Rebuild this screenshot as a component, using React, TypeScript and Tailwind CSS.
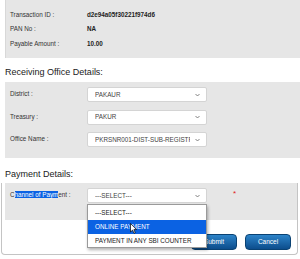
import { useState } from 'react';

const Chevron = () => (
  <svg width="5" height="3" viewBox="0 0 5 3" className="absolute right-[6px] top-1/2 -translate-y-1/2">
    <path d="M0.5 0.5 L2.5 2.5 L4.5 0.5" fill="none" stroke="#666" strokeWidth="0.8" />
  </svg>
);

const FakeSelect = ({ value }: { value: string }) => (
  <div className="relative w-[120px] h-[15px] bg-white border border-[#d4d4d4] rounded-[2px] flex items-center pl-[7px] pr-[16px] text-[#444] whitespace-nowrap">
    <span className="flex-1 min-w-0 overflow-hidden">{value}</span>
    <Chevron />
  </div>
);

const App = () => {
  const [channel] = useState('---SELECT---');

  const txnRows = [
    { label: 'Transaction ID :', value: 'd2e94a05f30221f974d6' },
    { label: 'PAN No :', value: 'NA' },
    { label: 'Payable Amount :', value: '10.00' },
  ];

  const officeRows = [
    { label: 'District :', value: 'PAKAUR' },
    { label: 'Treasury :', value: 'PAKUR' },
    { label: 'Office Name :', value: 'PKRSNR001-DIST-SUB-REGISTRAR' },
  ];

  const options = ['---SELECT---', 'ONLINE PAYMENT', 'PAYMENT IN ANY SBI COUNTER'];

  return (
    <div className="relative w-[300px] h-[259px] overflow-hidden bg-white font-['Liberation_Sans',Arial,sans-serif] text-[6.3px] text-[#333]">
      {/* Transaction summary */}
      <section className="ml-[5px] h-[58px] bg-[#e6e6e6] border-l border-[#d8d8d8] pt-[7px] pl-[4px]">
        {txnRows.map((row) => (
          <div key={row.label} className="grid grid-cols-[77px_1fr] h-[14.5px] items-center">
            <span>{row.label}</span>
            <span className="font-bold text-[#222]">{row.value}</span>
          </div>
        ))}
      </section>

      <h2 className="h-[24px] pt-[8px] pl-[5px] text-[9px] leading-[12px] text-[#222]">Receiving Office Details:</h2>

      {/* Receiving office */}
      <section className="ml-[5px] h-[76px] bg-[#e6e6e6] pt-[5px] pl-[5px]">
        {officeRows.map((row) => (
          <div key={row.label} className="flex items-start h-[22.5px]">
            <span className="w-[77px] pt-[2px]">{row.label}</span>
            <FakeSelect value={row.value} />
          </div>
        ))}
      </section>

      <h2 className="h-[25px] pt-[10px] pl-[5px] text-[9px] leading-[12px] text-[#222]">Payment Details:</h2>

      {/* Payment */}
      <section className="ml-[1px] w-[297px] h-[72px] border border-t-0 border-[#c4c4c4] rounded-b-[4px]">
        <div className="ml-[3px] h-[37px] bg-[#e6e6e6] pt-[5px] pl-[5px] flex items-start">
          <span className="w-[77px] pt-[2px] leading-[10px]">
            C<span className="bg-[#0b62e3] text-white">hannel of Paym</span>ent :
          </span>
          <div className="relative">
            <FakeSelect value={channel} />
            <div className="absolute left-0 top-[16px] w-[120px] h-[44px] bg-white border border-[#9a9a9a] shadow-[1px_2px_3px_rgba(0,0,0,0.3)] z-10 text-[#222]">
              {options.map((opt, i) => (
                <div
                  key={opt}
                  className={
                    i === 1
                      ? 'h-[14px] flex items-center pl-[7px] bg-[#0b62e3] text-white'
                      : 'h-[14.5px] flex items-center pl-[7px]'
                  }
                >
                  {opt}
                </div>
              ))}
              <svg width="7" height="11" viewBox="0 0 7 11" className="absolute left-[42px] top-[18px]">
                <path d="M0.5 0.5 L0.5 9 L2.6 7.1 L4 10.3 L5.3 9.8 L3.9 6.6 L6.5 6.6 Z" fill="#fff" stroke="#000" strokeWidth="0.7" />
              </svg>
            </div>
          </div>
          <span className="ml-[26px] pt-[2px] text-[8px] leading-[8px] text-[#e02020]">*</span>
        </div>
        <div className="flex justify-end gap-[8px] pt-[14px] pr-[6px]">
          <button className="w-[46px] h-[16px] rounded-[4px] border border-[#0a4273] bg-gradient-to-b from-[#2d84c9] to-[#0c4d8c] text-white text-[6.5px]">
            Submit
          </button>
          <button className="w-[46px] h-[16px] rounded-[4px] border border-[#0a4273] bg-gradient-to-b from-[#2d84c9] to-[#0c4d8c] text-white text-[6.5px]">
            Cancel
          </button>
        </div>
      </section>
    </div>
  );
};

export default App;
